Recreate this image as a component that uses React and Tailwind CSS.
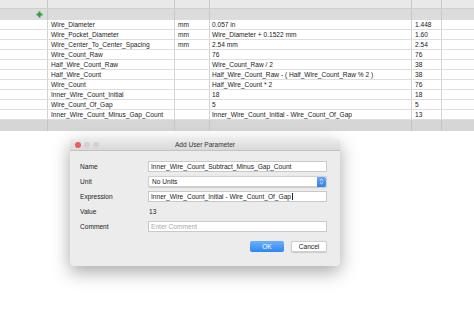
import React from "react";

const rows = [
    ["Wire_Diameter", "mm", "0.057 in", "1.448"],
    ["Wire_Pocket_Diameter", "mm", "Wire_Diameter + 0.1522 mm", "1.60"],
    ["Wire_Center_To_Center_Spacing", "mm", "2.54 mm", "2.54"],
    ["Wire_Count_Raw", "", "76", "76"],
    ["Half_Wire_Count_Raw", "", "Wire_Count_Raw / 2", "38"],
    ["Half_Wire_Count", "", "Half_Wire_Count_Raw - ( Half_Wire_Count_Raw % 2 )", "38"],
    ["Wire_Count", "", "Half_Wire_Count * 2", "76"],
    ["Inner_Wire_Count_Initial", "", "18", "18"],
    ["Wire_Count_Of_Gap", "", "5", "5"],
    ["Inner_Wire_Count_Minus_Gap_Count", "", "Inner_Wire_Count_Initial - Wire_Count_Of_Gap", "13"],
];

const cols = "grid grid-cols-[48px_127px_35px_202px_30px_1fr]";

const Table = () => {
    return (
        <div className="text-[6.6px] text-[#222]">
            <div className={`${cols} h-[9px] bg-[#e9e9e9] border-b border-[#cfcfcf]`}>
                <div className="border-r border-[#c8c8c8]"></div>
                <div className="border-r border-[#c8c8c8]"></div>
                <div className="border-r border-[#c8c8c8]"></div>
                <div className="border-r border-[#c8c8c8]"></div>
                <div className="border-r border-[#c8c8c8]"></div>
                <div></div>
            </div>
            <div className={`${cols} h-[11px] bg-[#dcdcdc]`}>
                <div className="border-r border-[#c8c8c8] flex items-center justify-end pr-[4px]">
                    <svg width="7" height="7" viewBox="0 0 7 7">
                        <path d="M2.5 0.5h2v2h2v2h-2v2h-2v-2h-2v-2h2z" fill="#2f9b3a" />
                    </svg>
                </div>
                <div className="border-r border-[#c8c8c8]"></div>
                <div className="border-r border-[#c8c8c8]"></div>
                <div className="border-r border-[#c8c8c8]"></div>
                <div className="border-r border-[#c8c8c8]"></div>
                <div></div>
            </div>
            {rows.map((r, i) => (
                <div key={i} className={`${cols} h-[10px] bg-white border-b border-[#dedede] leading-[9px]`}>
                    <div className="border-r border-[#d4d4d4]"></div>
                    <div className="border-r border-[#d4d4d4] pl-[3px] whitespace-nowrap overflow-hidden">{r[0]}</div>
                    <div className="border-r border-[#d4d4d4] pl-[3px]">{r[1]}</div>
                    <div className="border-r border-[#d4d4d4] pl-[2px] whitespace-nowrap overflow-hidden">{r[2]}</div>
                    <div className="border-r border-[#d4d4d4] pl-[3px]">{r[3]}</div>
                    <div></div>
                </div>
            ))}
            <div className={`${cols} h-[11px] bg-[#d6d6d6]`}>
                <div className="border-r border-[#c4c4c4]"></div>
                <div className="border-r border-[#c4c4c4]"></div>
                <div className="border-r border-[#c4c4c4]"></div>
                <div className="border-r border-[#c4c4c4]"></div>
                <div className="border-r border-[#c4c4c4]"></div>
                <div></div>
            </div>
        </div>
    );
};

const Field = ({ label, children }) => (
    <div className="flex items-center h-[15px]">
        <div className="w-[78px] pl-[10px]">{label}</div>
        <div className="w-[179px]">{children}</div>
    </div>
);

const Dialog = () => {
    return (
        <div className="ml-[70px] mt-[8px] w-[270px] bg-[#ececec] rounded-[4px] shadow-[0_6px_18px_rgba(0,0,0,0.35)] text-[6.6px] text-[#222]">
            <div className="relative h-[12px] flex items-center justify-center rounded-t-[4px] bg-gradient-to-b from-[#ebebeb] to-[#d9d9d9] border-b border-[#c2c2c2]">
                <div className="absolute left-[5px] top-[3px] flex gap-[3px]">
                    <span className="w-[6px] h-[6px] rounded-full bg-[#ec5d55]"></span>
                    <span className="w-[6px] h-[6px] rounded-full bg-[#d2d2d2]"></span>
                    <span className="w-[6px] h-[6px] rounded-full bg-[#d2d2d2]"></span>
                </div>
                <span className="text-[#333]">Add User Parameter</span>
            </div>
            <div className="pt-[8px] pb-[14px]">
                <Field label="Name">
                    <div className="h-[11px] bg-white border border-[#c9c9c9] pl-[2px] leading-[9px] whitespace-nowrap">Inner_Wire_Count_Subtract_Minus_Gap_Count</div>
                </Field>
                <Field label="Unit">
                    <div className="h-[11px] bg-white border border-[#d0d0d0] rounded-[2px] pl-[3px] leading-[9px] flex justify-between shadow-[0_0.5px_1px_rgba(0,0,0,0.15)]">
                        <span>No Units</span>
                        <span className="w-[9px] h-[10px] -mt-[0.5px] bg-gradient-to-b from-[#6aa9f7] to-[#2f7de9] rounded-r-[2px] flex items-center justify-center">
                            <svg width="5" height="7" viewBox="0 0 5 7">
                                <path d="M1 2.6L2.5 1.2L4 2.6M1 4.4L2.5 5.8L4 4.4" stroke="white" strokeWidth="0.8" fill="none" />
                            </svg>
                        </span>
                    </div>
                </Field>
                <Field label="Expression">
                    <div className="h-[11px] bg-white border border-[#c9c9c9] pl-[2px] leading-[9px] whitespace-nowrap">Inner_Wire_Count_Initial - Wire_Count_Of_Gap<span className="border-l border-[#222] ml-[0.5px]"></span></div>
                </Field>
                <Field label="Value">
                    <div className="pl-[1px]">13</div>
                </Field>
                <Field label="Comment">
                    <div className="h-[11px] bg-white border border-[#c9c9c9] pl-[2px] leading-[9px] text-[#aaa]">Enter Comment</div>
                </Field>
                <div className="flex justify-end gap-[7px] pr-[13px] mt-[7px]">
                    <button className="w-[34px] h-[11px] rounded-[2px] bg-gradient-to-b from-[#6bb0fb] to-[#2d86f2] text-white leading-[11px]">OK</button>
                    <button className="w-[36px] h-[11px] rounded-[2px] bg-white border border-[#d0d0d0] leading-[9px] shadow-[0_0.5px_1px_rgba(0,0,0,0.15)]">Cancel</button>
                </div>
            </div>
        </div>
    );
};

export default function App() {
    return (
        <div className="w-[474px] h-[313px] bg-white overflow-hidden" style={{ fontFamily: "'Liberation Sans', Arial, sans-serif" }}>
            <Table />
            <Dialog />
        </div>
    );
}
